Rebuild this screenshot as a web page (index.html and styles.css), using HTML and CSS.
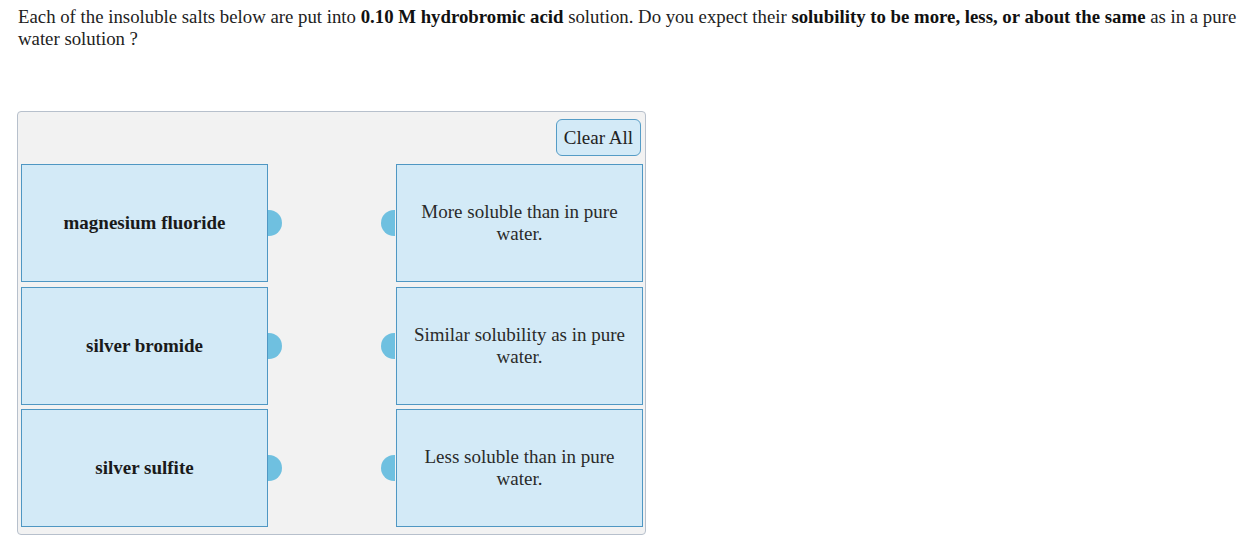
FILE: index.html
```html
<!DOCTYPE html>
<html lang="en">
<head>
    <meta charset="UTF-8">
    <meta name="viewport" content="width=device-width, initial-scale=1.0">
    <title>Solubility Matching</title>
    <link rel="stylesheet" href="styles.css">
</head>
<body>
    <div id="question">
        Each of the insoluble salts below are put into <b>0.10 M hydrobromic acid</b> solution. Do you expect their <b>solubility to be more, less, or about the same</b> as in a pure water solution ?
    </div>
    <div id="match_panel">
        <div class="toolbar">
            <button id="clear_all">Clear All</button>
        </div>
        <div class="match_grid">
            <div class="item source">
                <span class="label">magnesium fluoride</span>
                <span class="handle handle_out"></span>
            </div>
            <div class="spacer"></div>
            <div class="item target">
                <span class="handle handle_in"></span>
                <span class="label">More soluble than in pure water.</span>
            </div>

            <div class="item source">
                <span class="label">silver bromide</span>
                <span class="handle handle_out"></span>
            </div>
            <div class="spacer"></div>
            <div class="item target">
                <span class="handle handle_in"></span>
                <span class="label">Similar solubility as in pure water.</span>
            </div>

            <div class="item source">
                <span class="label">silver sulfite</span>
                <span class="handle handle_out"></span>
            </div>
            <div class="spacer"></div>
            <div class="item target">
                <span class="handle handle_in"></span>
                <span class="label">Less soluble than in pure water.</span>
            </div>
        </div>
    </div>
</body>
</html>
```

FILE: styles.css
```css
* {
    margin: 0;
    padding: 0;
    box-sizing: border-box;
}

body {
    width: 100%;
    font-family: "Liberation Serif", "Times New Roman", serif;
    font-size: 19px;
    line-height: 22px;
    color: #222;
    background: #fff;
}

#question {
    padding: 6px 4px 0 18px;
    font-size: 18.8px;
}

#question b {
    color: #111;
}

#match_panel {
    width: 629px;
    margin: 61px 0 0 17px;
    padding: 7px 2px 7px 3px;
    border: 1px solid #b7c0cc;
    border-radius: 4px;
    background-color: #f2f2f2;
}

.toolbar {
    display: flex;
    justify-content: flex-end;
    margin-bottom: 8px;
}

#clear_all {
    padding: 7px 7px 6px 7px;
    margin-right: 2px;
    border: 1px solid #559cc6;
    border-radius: 6px;
    background-color: #d3eaf7;
    color: #222;
    font-family: inherit;
    font-size: 19px;
    line-height: 22px;
    cursor: pointer;
}

.match_grid {
    display: grid;
    grid-template-columns: 247px 128px 247px;
    grid-auto-rows: 118px;
    row-gap: 4.5px;
}

.item {
    position: relative;
    display: flex;
    align-items: center;
    justify-content: center;
    text-align: center;
    border: 1px solid #4f97c3;
    background-color: #d3eaf7;
}

.source .label {
    font-weight: bold;
    color: #1a1a1a;
}

.target {
    padding: 0 15px;
}

.target .label {
    color: #2a2a2a;
}

.handle {
    position: absolute;
    top: 50%;
    width: 14px;
    height: 26px;
    margin-top: -13px;
    background-color: #6fc0e0;
}

.handle_out {
    right: -15px;
    border-radius: 0 13px 13px 0;
}

.handle_in {
    left: -16px;
    border-radius: 13px 0 0 13px;
}
```
